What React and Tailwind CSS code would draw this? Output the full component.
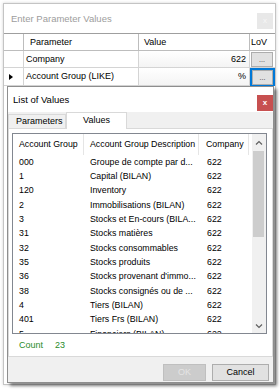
import React from "react";

const accounts = [
  ["000", "Groupe de compte par d...", "622"],
  ["1", "Capital (BILAN)", "622"],
  ["120", "Inventory", "622"],
  ["2", "Immobilisations (BILAN)", "622"],
  ["3", "Stocks et En-cours (BILA...", "622"],
  ["31", "Stocks matières", "622"],
  ["32", "Stocks consommables", "622"],
  ["35", "Stocks produits", "622"],
  ["36", "Stocks provenant d'immo...", "622"],
  ["38", "Stocks consignés ou de ...", "622"],
  ["4", "Tiers (BILAN)", "622"],
  ["401", "Tiers Frs  (BILAN)", "622"],
  ["5", "Financiers (BILAN)", "622"],
];

const Chevron = ({ up }) => (
  <svg width="8" height="5" viewBox="0 0 8 5">
    <path
      d={up ? "M1 4.5 L4 1.5 L7 4.5" : "M1 0.5 L4 3.5 L7 0.5"}
      fill="none"
      stroke="#606060"
      strokeWidth="1.2"
    />
  </svg>
);

const LovButton = () => (
  <div className="w-[22px] h-[15px] bg-[#e1e1e1] border border-[#adadad] flex items-end justify-center pb-[3px] text-[7px] text-[#333]">
    ...
  </div>
);

export default function App() {
  return (
    <div className="w-[280px] h-[390px] overflow-hidden bg-white pt-[3px] pl-[3px] font-['Liberation_Sans',Arial,sans-serif] text-[9px] leading-none text-black">
      {/* Enter Parameter Values (inactive, behind) */}
      <div className="w-[273px] h-[382px] border border-[#c4c4c4] bg-white shadow-[0_0_3px_rgba(0,0,0,0.18)] flex flex-col">
        <div className="h-[29px] shrink-0 flex justify-between">
          <span className="pl-[7px] self-center text-[9.5px] text-[#9d9d9d]">Enter Parameter Values</span>
          <span className="mt-[9px] mr-[2px] w-[16px] h-[16px] bg-[#e8e8e8] text-[#f7f7f7] text-[8px] flex items-center justify-center">
            x
          </span>
        </div>

        <div className="grid grid-cols-[20px_115px_111px_25px] shrink-0 border-t border-[#9f9f9f]">
          {/* header */}
          <div className="h-[17px] border-r border-b border-[#bdbdbd]" />
          <div className="h-[17px] border-r border-b border-[#bdbdbd] pl-[6px] flex items-center">Parameter</div>
          <div className="h-[17px] border-r border-b border-[#bdbdbd] pl-[5px] flex items-center">Value</div>
          <div className="h-[17px] border-b border-[#bdbdbd] pl-[1px] flex items-center">LoV</div>

          {/* Company */}
          <div className="h-[17px] border-r border-b border-[#d4d4d4]" />
          <div className="h-[17px] border-r border-b border-[#d4d4d4] pl-[2px] flex items-center">Company</div>
          <div className="h-[17px] border-r border-b border-[#d4d4d4] pr-[3px] flex items-center justify-end bg-gradient-to-b from-white to-[#f4f4f4]">
            622
          </div>
          <div className="h-[17px] border-b border-[#d4d4d4] pl-[1px] pt-[1px]">
            <LovButton />
          </div>

          {/* Account Group (LIKE) */}
          <div className="h-[18px] border-r border-b border-[#d4d4d4] pl-[5px] flex items-center">
            <span className="w-0 h-0 border-y-[3.5px] border-y-transparent border-l-[4px] border-l-black" />
          </div>
          <div className="h-[18px] border-r border-b border-[#d4d4d4] pl-[2px] flex items-center">Account Group (LIKE)</div>
          <div className="h-[18px] border-r border-b border-[#d4d4d4] pr-[3px] flex items-center justify-end bg-gradient-to-b from-white to-[#f4f4f4]">
            %
          </div>
          <div className="h-[18px] border-2 border-[#0078d7] flex items-center justify-center">
            <LovButton />
          </div>
        </div>

        {/* List of Values (active, on top) */}
        <div className="ml-[3px] w-[267px] h-[297px] shrink-0 border border-[#8e8e8e] bg-[#f0f0f0] shadow-[3px_3px_3px_rgba(0,0,0,0.45)] flex flex-col">
          <div className="h-[25px] shrink-0 bg-white flex justify-between">
            <span className="pl-[5px] self-center text-[9.5px]">List of Values</span>
            <span className="mt-[8px] w-[16px] h-[16px] bg-[#c75050] text-white text-[8px] font-bold flex items-center justify-center">
              x
            </span>
          </div>

          <div className="h-[16px] shrink-0 flex items-end">
            <div className="w-[58px] h-[14px] border border-b-0 border-[#d9d9d9] bg-[#f0f0f0] pl-[7px] flex items-center">
              Parameters
            </div>
            <div className="relative z-10 -mb-[1px] w-[61px] h-[17px] border border-b-0 border-[#d9d9d9] bg-white flex items-center justify-center pb-[2px]">
              Values
            </div>
          </div>

          <div className="h-[229px] shrink-0 border border-[#d9d9d9] bg-white px-[3px] pt-[4px] flex flex-col">
            <div className="w-[255px] h-[201px] shrink-0 border border-[#828790] flex overflow-hidden text-[8.8px]">
              <div className="w-[239px] flex flex-col overflow-hidden">
                <div className="h-[21px] shrink-0 flex">
                  <div className="w-[71px] border-r border-[#e5e5e5] pl-[6px] flex items-center">Account Group</div>
                  <div className="w-[115px] border-r border-[#e5e5e5] pl-[6px] flex items-center">Account Group Description</div>
                  <div className="w-[50px] border-r border-[#e5e5e5] pl-[7px] flex items-center">Company</div>
                </div>
                {accounts.map(([code, desc, company]) => (
                  <div key={code} className="h-[14.33px] shrink-0 flex items-center whitespace-nowrap">
                    <span className="w-[71px] pl-[6px]">{code}</span>
                    <span className="w-[115px] pl-[6px] overflow-hidden">{desc}</span>
                    <span className="w-[50px] pl-[8px]">{company}</span>
                  </div>
                ))}
              </div>
              <div className="w-[14px] bg-[#f0f0f0] flex flex-col">
                <div className="h-[17px] shrink-0 flex items-center justify-center">
                  <Chevron up />
                </div>
                <div className="ml-[1px] w-[11px] h-[86px] bg-[#cdcdcd]" />
                <div className="flex-1" />
                <div className="h-[14px] shrink-0 flex items-center justify-center">
                  <Chevron />
                </div>
              </div>
            </div>
            <div className="flex-1 flex items-center pl-[7px] text-[#2a8c2a]">
              <span className="w-[36px]">Count</span>
              <span>23</span>
            </div>
          </div>

          <div className="flex-1 flex justify-end items-start gap-[6px] pt-[7px] pr-[4px]">
            <div className="w-[43px] h-[17px] bg-[#cccccc] border border-[#bfbfbf] text-[#e4e4e4] flex items-center justify-center">
              OK
            </div>
            <div className="w-[57px] h-[17px] bg-[#e1e1e1] border border-[#adadad] flex items-center justify-center">
              Cancel
            </div>
          </div>
        </div>
      </div>
    </div>
  );
}
